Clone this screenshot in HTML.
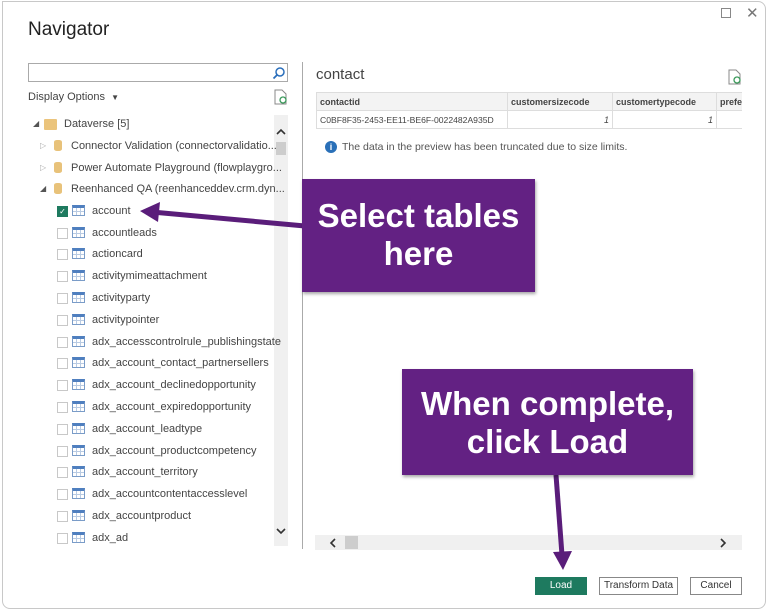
<!DOCTYPE html>
<html><head><meta charset="utf-8"><style>
*{margin:0;padding:0;box-sizing:border-box}
body{width:768px;height:611px;overflow:hidden;background:#fff;font-family:"Liberation Sans",sans-serif;position:relative;color:#333}
.a{position:absolute}
.frame{left:2px;top:1px;width:764px;height:608px;border:1px solid #c8c8c8;border-radius:0 8px 8px 8px}
.row{position:absolute;font-size:11px;color:#444;white-space:nowrap;line-height:14px}
.cb{position:absolute;width:11px;height:11px;border:1px solid #c8c8c8;background:#fff}
.tb{position:absolute;width:13px;height:11px;border:1px solid #7a9cc8;border-top:3px solid #4f7fbf;background:
 linear-gradient(#b9cbe3,#b9cbe3) 3px 0/1px 100% no-repeat,
 linear-gradient(#b9cbe3,#b9cbe3) 7px 0/1px 100% no-repeat,
 linear-gradient(#b9cbe3,#b9cbe3) 0 3px/100% 1px no-repeat,#fff}
.db{position:absolute;width:8px;height:11px;background:#e8c27a;border-radius:3px/2px}
.call{position:absolute;background:#632183;color:#fff;font-weight:bold;text-align:center;box-shadow:1px 2px 3px rgba(0,0,0,.35);font-size:33px;line-height:38px}
td{border:1px solid #ddd;font-size:9px;padding:0 3px;height:18px;color:#444;white-space:nowrap;overflow:hidden}
.btn{position:absolute;top:577px;height:18px;border:1px solid #888;font-size:10px;text-align:center;line-height:16px;color:#333;background:#fff}
</style></head><body>
<div class="a frame"></div>
<div class="a" style="left:721px;top:8px;width:10px;height:10px;border:1px solid #888"></div>
<div class="a" style="left:746px;top:4px;font-size:15px;color:#777">✕</div>
<div class="a" style="left:28px;top:19px;font-size:19px;color:#222">Navigator</div>
<div class="a" style="left:28px;top:63px;width:260px;height:19px;border:1px solid #aaa"></div>
<svg class="a" style="left:272px;top:66px" width="14" height="14"><circle cx="8" cy="6" r="4" fill="none" stroke="#2a6ebb" stroke-width="1.5"/><path d="M5 9 L1.5 12.5" stroke="#2a6ebb" stroke-width="1.8"/></svg>
<div class="a" style="left:28px;top:91px;font-size:11px;color:#444">Display Options &nbsp;<span style="font-size:8px">▼</span></div>
<svg class="a" style="left:274px;top:89px" width="14" height="16"><path d="M1 1h7l4 4v10H1z" fill="#fff" stroke="#888"/><circle cx="9" cy="11" r="3" fill="none" stroke="#3a9a5a" stroke-width="1.3"/></svg>
<div class="a" style="left:274px;top:115px;width:14px;height:431px;background:#f0f0f0"></div>
<svg class="a" style="left:276px;top:128px" width="10" height="8"><path d="M1 6 L5 2 L9 6" fill="none" stroke="#333" stroke-width="1.6"/></svg>
<div class="a" style="left:276px;top:142px;width:10px;height:13px;background:#cdcdcd"></div>
<svg class="a" style="left:276px;top:527px" width="10" height="8"><path d="M1 2 L5 6 L9 2" fill="none" stroke="#333" stroke-width="1.6"/></svg>
<div class="a" style="left:302px;top:62px;width:1px;height:487px;background:#aaa"></div>

<div class="row" style="left:33px;top:117px;font-size:8px;color:#555">◢</div>
<div class="a" style="left:44px;top:119px;width:13px;height:11px;background:#ebc47c;border-radius:1px"></div>
<div class="row" style="left:64px;top:117px">Dataverse [5]</div>
<div class="row" style="left:40px;top:139px;font-size:8px;color:#aaa">▷</div><div class="db" style="left:54px;top:140px"></div><div class="row" style="left:71px;top:139px">Connector Validation (connectorvalidatio...</div>
<div class="row" style="left:40px;top:161px;font-size:8px;color:#aaa">▷</div><div class="db" style="left:54px;top:162px"></div><div class="row" style="left:71px;top:161px">Power Automate Playground (flowplaygro...</div>
<div class="row" style="left:40px;top:182px;font-size:8px;color:#555">◢</div><div class="db" style="left:54px;top:183px"></div><div class="row" style="left:71px;top:182px">Reenhanced QA (reenhanceddev.crm.dyn...</div>

<div class="cb" style="left:57px;top:206px;background:#1e7a5f;border-color:#1e7a5f;color:#fff;font-size:8px;line-height:9px;text-align:center">✓</div>
<div class="tb" style="left:72px;top:205px"></div><div class="row" style="left:92px;top:204px">account</div>
<div class="cb" style="left:57px;top:228px"></div><div class="tb" style="left:72px;top:227px"></div><div class="row" style="left:92px;top:226px">accountleads</div>
<div class="cb" style="left:57px;top:249px"></div><div class="tb" style="left:72px;top:248px"></div><div class="row" style="left:92px;top:247px">actioncard</div>
<div class="cb" style="left:57px;top:271px"></div><div class="tb" style="left:72px;top:270px"></div><div class="row" style="left:92px;top:269px">activitymimeattachment</div>
<div class="cb" style="left:57px;top:293px"></div><div class="tb" style="left:72px;top:292px"></div><div class="row" style="left:92px;top:291px">activityparty</div>
<div class="cb" style="left:57px;top:315px"></div><div class="tb" style="left:72px;top:314px"></div><div class="row" style="left:92px;top:313px">activitypointer</div>
<div class="cb" style="left:57px;top:337px"></div><div class="tb" style="left:72px;top:336px"></div><div class="row" style="left:92px;top:335px">adx_accesscontrolrule_publishingstate</div>
<div class="cb" style="left:57px;top:358px"></div><div class="tb" style="left:72px;top:357px"></div><div class="row" style="left:92px;top:356px">adx_account_contact_partnersellers</div>
<div class="cb" style="left:57px;top:380px"></div><div class="tb" style="left:72px;top:379px"></div><div class="row" style="left:92px;top:378px">adx_account_declinedopportunity</div>
<div class="cb" style="left:57px;top:402px"></div><div class="tb" style="left:72px;top:401px"></div><div class="row" style="left:92px;top:400px">adx_account_expiredopportunity</div>
<div class="cb" style="left:57px;top:424px"></div><div class="tb" style="left:72px;top:423px"></div><div class="row" style="left:92px;top:422px">adx_account_leadtype</div>
<div class="cb" style="left:57px;top:446px"></div><div class="tb" style="left:72px;top:445px"></div><div class="row" style="left:92px;top:444px">adx_account_productcompetency</div>
<div class="cb" style="left:57px;top:467px"></div><div class="tb" style="left:72px;top:466px"></div><div class="row" style="left:92px;top:465px">adx_account_territory</div>
<div class="cb" style="left:57px;top:489px"></div><div class="tb" style="left:72px;top:488px"></div><div class="row" style="left:92px;top:487px">adx_accountcontentaccesslevel</div>
<div class="cb" style="left:57px;top:511px"></div><div class="tb" style="left:72px;top:510px"></div><div class="row" style="left:92px;top:509px">adx_accountproduct</div>
<div class="cb" style="left:57px;top:533px"></div><div class="tb" style="left:72px;top:532px"></div><div class="row" style="left:92px;top:531px">adx_ad</div>

<div class="a" style="left:316px;top:66px;font-size:15px;color:#444">contact</div>
<svg class="a" style="left:728px;top:69px" width="14" height="16"><path d="M1 1h7l4 4v10H1z" fill="#fff" stroke="#888"/><circle cx="9" cy="11" r="3" fill="none" stroke="#3a9a5a" stroke-width="1.3"/></svg>
<div class="a" style="left:316px;top:92px;width:426px;height:37px;overflow:hidden">
<table style="border-collapse:collapse;width:440px;table-layout:fixed">
<tr style="background:#f3f3f3"><td style="width:191px;font-weight:bold">contactid</td><td style="width:105px;font-weight:bold">customersizecode</td><td style="width:104px;font-weight:bold">customertypecode</td><td style="font-weight:bold">prefe</td></tr>
<tr><td style="font-size:8.6px">C0BF8F35-2453-EE11-BE6F-0022482A935D</td><td style="text-align:right;font-style:italic">1</td><td style="text-align:right;font-style:italic">1</td><td></td></tr>
</table></div>
<div class="a" style="left:325px;top:141px;width:12px;height:12px;border-radius:50%;background:#2a70b8;color:#fff;font-size:9px;font-weight:bold;text-align:center;line-height:12px">i</div>
<div class="a" style="left:342px;top:141px;font-size:10.5px;color:#555">The data in the preview has been truncated due to size limits.</div>

<div class="a" style="left:315px;top:535px;width:427px;height:15px;background:#f0f0f0"></div>
<svg class="a" style="left:329px;top:538px" width="8" height="10"><path d="M6 1 L2 5 L6 9" fill="none" stroke="#333" stroke-width="1.6"/></svg>
<div class="a" style="left:345px;top:536px;width:13px;height:13px;background:#cdcdcd"></div>
<svg class="a" style="left:719px;top:538px" width="8" height="10"><path d="M2 1 L6 5 L2 9" fill="none" stroke="#333" stroke-width="1.6"/></svg>

<div class="btn" style="left:535px;width:52px;background:#1e7a5f;border-color:#1e7a5f;color:#fff">Load</div>
<div class="btn" style="left:599px;width:79px">Transform Data</div>
<div class="btn" style="left:690px;width:52px">Cancel</div>

<svg class="a" style="left:0;top:0" width="768" height="611">
<path d="M305 226 L152 212" stroke="#5a1d7a" stroke-width="5"/>
<path d="M140 211 L160 202 L158 222 Z" fill="#5a1d7a"/>
<path d="M556 475 L562 555" stroke="#5a1d7a" stroke-width="5"/>
<path d="M563 570 L553 552 L572 551 Z" fill="#5a1d7a"/>
</svg>
<div class="call" style="left:302px;top:179px;width:233px;height:113px;padding-top:18px">Select tables<br>here</div>
<div class="call" style="left:402px;top:369px;width:291px;height:106px;padding-top:16px">When complete,<br>click Load</div>
</body></html>
